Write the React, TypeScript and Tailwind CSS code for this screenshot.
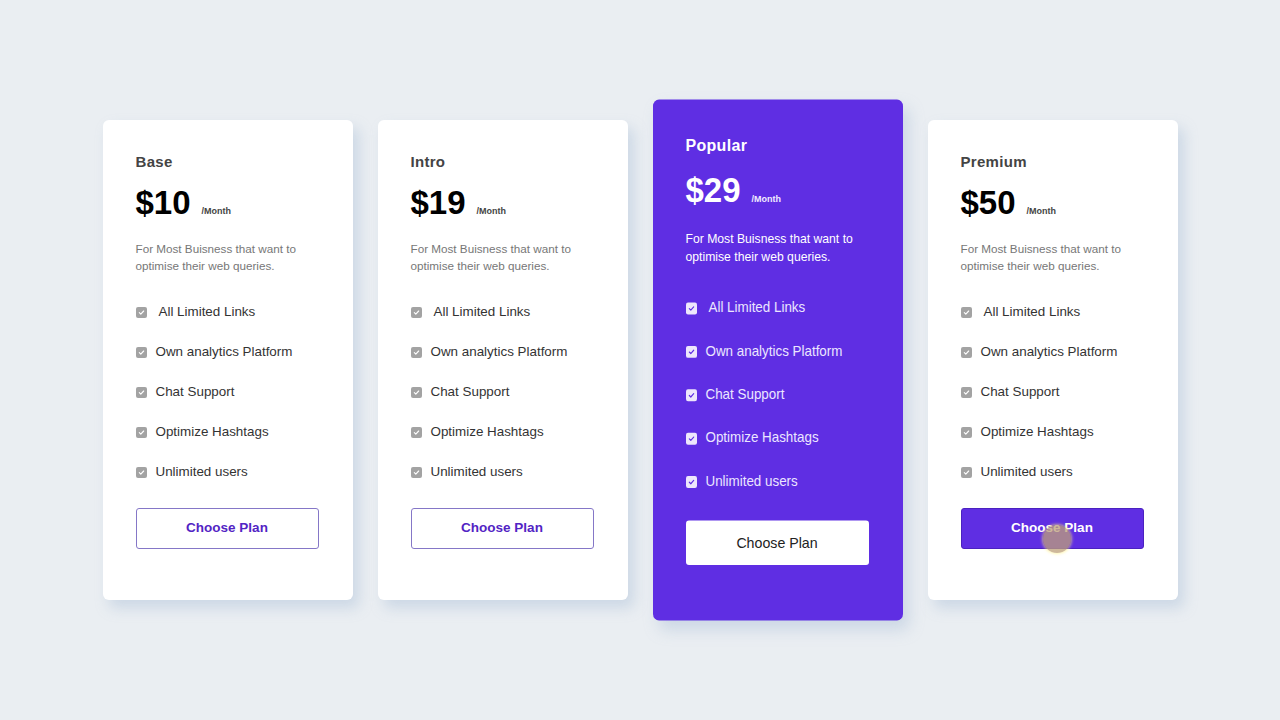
import React from 'react';

type Plan = {
  name: string;
  price: string;
  popular?: boolean;
  filled?: boolean;
};

const plans: Plan[] = [
  { name: 'Base', price: '$10' },
  { name: 'Intro', price: '$19' },
  { name: 'Popular', price: '$29', popular: true },
  { name: 'Premium', price: '$50', filled: true },
];

const features = [
  ' All Limited Links',
  'Own analytics Platform',
  'Chat Support',
  'Optimize Hashtags',
  'Unlimited users',
];

const Check = ({ light }: { light?: boolean }) => (
  <span
    className={`flex h-[11px] w-[11px] shrink-0 items-center justify-center rounded-[2px] ${
      light ? 'bg-[#ede6fc]' : 'bg-[#a3a3a3]'
    }`}
  >
    <svg width="7" height="7" viewBox="0 0 8 8" fill="none">
      <path
        d="M1.5 4.2 L3.2 5.8 L6.5 2.3"
        stroke={light ? '#5f2ee3' : '#ffffff'}
        strokeWidth="1.3"
        strokeLinecap="round"
        strokeLinejoin="round"
      />
    </svg>
  </span>
);

const PlanCard = ({ plan }: { plan: Plan }) => {
  const p = plan.popular;
  return (
    <div
      className={`flex w-[250px] flex-col rounded-[6px] pl-[33px] pr-[33px] pt-[32px] pb-[51px] shadow-[6px_8px_14px_rgba(150,175,205,0.35)] ${
        p ? 'scale-y-[1.085] bg-[#5f2ee3]' : 'bg-white'
      }`}
    >
      <h3
        className={`font-bold leading-[20px] tracking-[0.3px] ${
          p ? 'text-[16px] text-white' : 'text-[15px] text-[#444444]'
        }`}
      >
        {plan.name}
      </h3>
      <div className="mt-[11px] flex items-baseline">
        <span className={`text-[33px] font-bold leading-[40px] ${p ? 'text-white' : 'text-black'}`}>
          {plan.price}
        </span>
        <span className={`ml-[11px] text-[9px] font-bold ${p ? 'text-[#f1ecff]' : 'text-[#444444]'}`}>
          /Month
        </span>
      </div>
      <p
        className={`mt-[17px] leading-[17px] ${
          p ? 'text-[12.2px] text-white' : 'text-[11.7px] text-[#777777]'
        }`}
      >
        For Most Buisness that want to
        <br />
        optimise their web queries.
      </p>
      <ul className="mt-[28px] flex flex-col gap-[20px]">
        {features.map((f) => (
          <li key={f} className="flex h-[20px] items-center gap-[9px]">
            <Check light={p} />
            <span
              className={`whitespace-pre text-[13.4px] ${p ? 'text-[#ece6ff]' : 'text-[#333333]'}`}
            >
              {f}
            </span>
          </li>
        ))}
      </ul>
      <button
        className={`relative mt-[26px] h-[41px] w-[183px] rounded-[3px] ${
          p
            ? 'bg-white text-[14.2px] font-medium text-[#222222]'
            : plan.filled
            ? 'border border-[#4b22c0] bg-[#5f2ee3] text-[13.5px] font-bold text-white'
            : 'border border-[#8577c7] bg-white text-[13.5px] font-bold text-[#5224c4]'
        }`}
      >
        Choose Plan
        {plan.filled && (
          <span className="absolute left-[81px] top-[16px] h-[28px] w-[28px] rounded-full bg-[rgba(190,160,120,0.75)] shadow-[0_0_3px_1px_rgba(255,240,120,0.6)]" />
        )}
      </button>
    </div>
  );
};

export default function App() {
  return (
    <div
      className="flex min-h-[720px] items-center justify-center bg-[#eaeef2]"
      style={{ fontFamily: '"Liberation Sans", Arial, sans-serif' }}
    >
      <div className="flex items-center gap-[25px]">
        {plans.map((plan) => (
          <PlanCard key={plan.name} plan={plan} />
        ))}
      </div>
    </div>
  );
}
